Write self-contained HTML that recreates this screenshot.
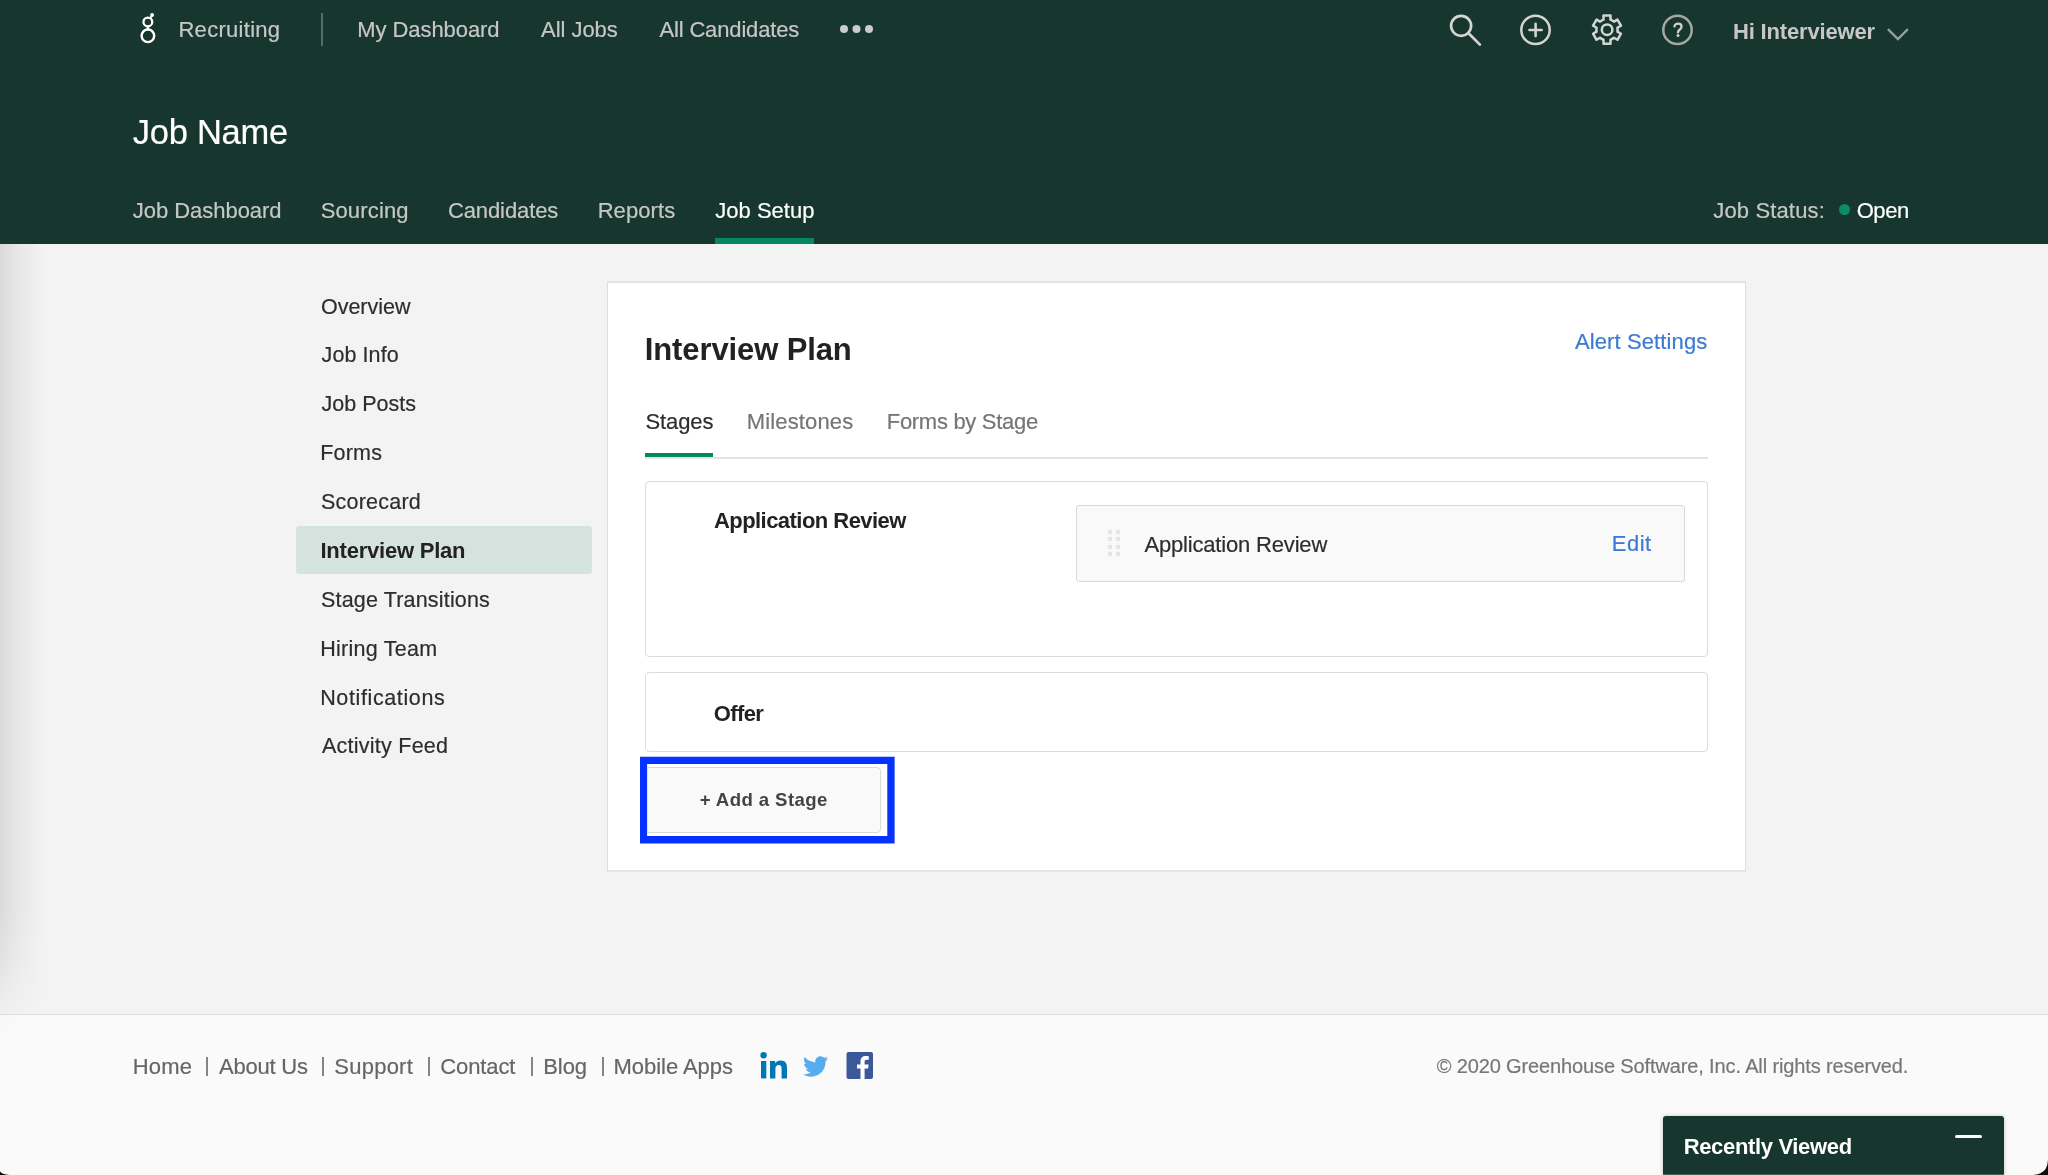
<!DOCTYPE html>
<html><head><meta charset="utf-8"><title>Interview Plan</title>
<style>
html,body{margin:0;padding:0;}
body{width:2048px;height:1175px;position:relative;overflow:hidden;background:#f3f3f3;font-family:"Liberation Sans",sans-serif;}
.t{position:absolute;white-space:nowrap;display:block;}
.b{position:absolute;box-sizing:border-box;}
svg{position:absolute;overflow:visible;}
#w{position:absolute;left:0;top:0;width:2048px;height:1175px;will-change:transform;}
</style></head><body><div id="w">
<div class="b" style="left:0px;top:0px;width:2048px;height:244px;background:#17362d;"></div>
<svg style="left:138px;top:10px" width="22" height="36" viewBox="138 10 22 36">
<circle cx="147.9" cy="35.8" r="6.3" fill="none" stroke="#fff" stroke-width="2.4"/>
<circle cx="147.85" cy="21.95" r="4.4" fill="none" stroke="#fff" stroke-width="2.3"/>
<path d="M147.9 26.3 V29.6" stroke="#fff" stroke-width="2.4" fill="none"/>
<path d="M150.2 18 L152 15.2" stroke="#fff" stroke-width="1.7" fill="none"/>
<circle cx="152.1" cy="15" r="1.9" fill="#fff"/>
</svg>
<span class="t" style="left:178.45px;top:17px;font-size:22px;line-height:25px;height:25px;color:#c7c7c7;letter-spacing:0.287px;-webkit-text-stroke:0.2px;">Recruiting</span>
<div class="b" style="left:321.2px;top:13px;width:1.5px;height:33px;background:#566d65;"></div>
<span class="t" style="left:357.35px;top:17px;font-size:22px;line-height:25px;height:25px;color:#c7c7c7;letter-spacing:-0.077px;-webkit-text-stroke:0.2px;">My Dashboard</span>
<span class="t" style="left:541.11px;top:17px;font-size:22px;line-height:25px;height:25px;color:#c7c7c7;letter-spacing:-0.056px;-webkit-text-stroke:0.2px;">All Jobs</span>
<span class="t" style="left:659.41px;top:17px;font-size:22px;line-height:25px;height:25px;color:#c7c7c7;letter-spacing:-0.148px;-webkit-text-stroke:0.2px;">All Candidates</span>
<svg style="left:838px;top:23px" width="38" height="12" viewBox="838 23 38 12">
<circle cx="844" cy="29" r="4" fill="#cccccc"/><circle cx="856.5" cy="29" r="4" fill="#cccccc"/><circle cx="869" cy="29" r="4" fill="#cccccc"/></svg>
<svg style="left:1440px;top:8px" width="260" height="46" viewBox="1440 8 260 46" fill="none" stroke="#d4d4d4" stroke-width="2.7">
<circle cx="1461.1" cy="25.8" r="10"/><path d="M1468.3 33 L1479.9 44.6" stroke-linecap="round"/>
<circle cx="1535.5" cy="29.9" r="14.2" stroke-width="2.5"/><path d="M1535.6 23.9 V36.1 M1529.5 30 H1541.7" stroke-width="2.6" stroke-linecap="round"/>
<path d="M1603.50 19.69L1603.50 15.60L1610.50 15.60L1610.50 19.69A10.6 10.6 0 0 1 1613.92 21.67L1617.46 19.62L1620.96 25.68L1617.42 27.73A10.6 10.6 0 0 1 1617.42 31.67L1620.96 33.72L1617.46 39.78L1613.92 37.73A10.6 10.6 0 0 1 1610.50 39.71L1610.50 43.80L1603.50 43.80L1603.50 39.71A10.6 10.6 0 0 1 1600.08 37.73L1596.54 39.78L1593.04 33.72L1596.58 31.67A10.6 10.6 0 0 1 1596.58 27.73L1593.04 25.68L1596.54 19.62L1600.08 21.67A10.6 10.6 0 0 1 1603.50 19.69Z" stroke-width="2.5" stroke-linejoin="round"/>
<circle cx="1607.1" cy="29.7" r="5.3" stroke-width="2.5"/>
<circle cx="1677.5" cy="29.9" r="14.2" stroke="#a6a6a6" stroke-width="2.5"/>
<path d="M1674.5 26.6 C1674.5 22.6 1681.6 22.6 1681.6 26.8 C1681.6 29.4 1678 29.6 1678 32.4" stroke="#d0d0d0" stroke-width="2.3" stroke-linecap="round"/>
<circle cx="1678" cy="35.5" r="1.5" fill="#d0d0d0" stroke="none"/>
</svg>
<span class="t" style="left:1732.98px;top:19px;font-size:22px;line-height:25px;height:25px;color:#c7c7c7;letter-spacing:-0.167px;font-weight:700;">Hi Interviewer</span>
<svg style="left:1884px;top:24px" width="30" height="20" viewBox="1884 24 30 20" fill="none" stroke="#9c9c9c" stroke-width="2.4">
<path d="M1887.9 29.2 L1897.9 39 L1907.9 29.2"/></svg>
<span class="t" style="left:132.81px;top:113px;font-size:34.5px;line-height:38px;height:38px;color:#fff;letter-spacing:-0.267px;-webkit-text-stroke:0.2px;">Job Name</span>
<span class="t" style="left:132.81px;top:198px;font-size:22px;line-height:25px;height:25px;color:#c7c7c7;letter-spacing:-0.037px;-webkit-text-stroke:0.2px;">Job Dashboard</span>
<span class="t" style="left:320.65px;top:198px;font-size:22px;line-height:25px;height:25px;color:#c7c7c7;letter-spacing:0.155px;-webkit-text-stroke:0.2px;">Sourcing</span>
<span class="t" style="left:447.93px;top:198px;font-size:22px;line-height:25px;height:25px;color:#c7c7c7;letter-spacing:-0.099px;-webkit-text-stroke:0.2px;">Candidates</span>
<span class="t" style="left:597.65px;top:198px;font-size:22px;line-height:25px;height:25px;color:#c7c7c7;letter-spacing:0.078px;-webkit-text-stroke:0.2px;">Reports</span>
<span class="t" style="left:715.31px;top:198px;font-size:22px;line-height:25px;height:25px;color:#fff;letter-spacing:-0.001px;-webkit-text-stroke:0.2px;">Job Setup</span>
<div class="b" style="left:715px;top:238px;width:99px;height:6px;background:#058762;"></div>
<span class="t" style="left:1713.31px;top:198px;font-size:22px;line-height:25px;height:25px;color:#c7c7c7;letter-spacing:0.139px;-webkit-text-stroke:0.2px;">Job Status:</span>
<div class="b" style="left:1839.3px;top:204.2px;width:10.6px;height:10.6px;background:#0e8a65;border-radius:50%;"></div>
<span class="t" style="left:1856.71px;top:198px;font-size:22px;line-height:25px;height:25px;color:#fff;letter-spacing:-0.449px;-webkit-text-stroke:0.2px;">Open</span>
<div class="b" style="left:0px;top:244px;width:52px;height:800px;background:linear-gradient(to right,rgba(0,0,0,0.103) 0,rgba(0,0,0,0.07) 10px,rgba(0,0,0,0.045) 20px,rgba(0,0,0,0.028) 30px,rgba(0,0,0,0.009) 40px,rgba(0,0,0,0) 50px);-webkit-mask-image:linear-gradient(to bottom,#000 0,#000 83%,rgba(0,0,0,0.65) 89.5%,rgba(0,0,0,0.15) 96%,rgba(0,0,0,0) 100%);mask-image:linear-gradient(to bottom,#000 0,#000 83%,rgba(0,0,0,0.65) 89.5%,rgba(0,0,0,0.15) 96%,rgba(0,0,0,0) 100%);z-index:5;"></div>
<div class="b" style="left:296px;top:526px;width:296px;height:48px;background:#d5e3de;border-radius:3px;"></div>
<span class="t" style="left:320.93px;top:295px;font-size:21.5px;line-height:24px;height:24px;color:#2d2d2d;letter-spacing:-0.005px;-webkit-text-stroke:0.2px;">Overview</span>
<span class="t" style="left:321.61px;top:343px;font-size:21.5px;line-height:24px;height:24px;color:#2d2d2d;letter-spacing:0.077px;-webkit-text-stroke:0.2px;">Job Info</span>
<span class="t" style="left:321.61px;top:392px;font-size:21.5px;line-height:24px;height:24px;color:#2d2d2d;letter-spacing:-0.012px;-webkit-text-stroke:0.2px;">Job Posts</span>
<span class="t" style="left:320.19px;top:441px;font-size:21.5px;line-height:24px;height:24px;color:#2d2d2d;letter-spacing:0.208px;-webkit-text-stroke:0.2px;">Forms</span>
<span class="t" style="left:320.97px;top:490px;font-size:21.5px;line-height:24px;height:24px;color:#2d2d2d;letter-spacing:0.234px;-webkit-text-stroke:0.2px;">Scorecard</span>
<span class="t" style="left:320.48px;top:538px;font-size:22px;line-height:25px;height:25px;color:#222;letter-spacing:-0.223px;font-weight:700;">Interview Plan</span>
<span class="t" style="left:320.97px;top:588px;font-size:21.5px;line-height:24px;height:24px;color:#2d2d2d;letter-spacing:0.172px;-webkit-text-stroke:0.2px;">Stage Transitions</span>
<span class="t" style="left:320.19px;top:637px;font-size:21.5px;line-height:24px;height:24px;color:#2d2d2d;letter-spacing:0.270px;-webkit-text-stroke:0.2px;">Hiring Team</span>
<span class="t" style="left:320.19px;top:686px;font-size:21.5px;line-height:24px;height:24px;color:#2d2d2d;letter-spacing:0.620px;-webkit-text-stroke:0.2px;">Notifications</span>
<span class="t" style="left:321.91px;top:734px;font-size:21.5px;line-height:24px;height:24px;color:#2d2d2d;letter-spacing:0.255px;-webkit-text-stroke:0.2px;">Activity Feed</span>
<div class="b" style="left:607px;top:281px;width:1139px;height:591px;background:#fff;border:1px solid #dedede;border-top:2px solid #e5e5e5;border-bottom:2px solid #e5e5e5;"></div>
<span class="t" style="left:644.78px;top:332px;font-size:31px;line-height:35px;height:35px;color:#222;letter-spacing:-0.113px;font-weight:700;">Interview Plan</span>
<span class="t" style="left:1574.91px;top:329px;font-size:22px;line-height:25px;height:25px;color:#3b7bd4;letter-spacing:0.115px;-webkit-text-stroke:0.2px;">Alert Settings</span>
<span class="t" style="left:645.45px;top:409px;font-size:22px;line-height:25px;height:25px;color:#2d2d2d;letter-spacing:-0.100px;-webkit-text-stroke:0.2px;">Stages</span>
<span class="t" style="left:746.85px;top:409px;font-size:22px;line-height:25px;height:25px;color:#757575;letter-spacing:0.127px;-webkit-text-stroke:0.2px;">Milestones</span>
<span class="t" style="left:886.75px;top:409px;font-size:22px;line-height:25px;height:25px;color:#757575;letter-spacing:-0.300px;-webkit-text-stroke:0.2px;">Forms by Stage</span>
<div class="b" style="left:645px;top:457px;width:1062.5px;height:2px;background:#e4e4e4;"></div>
<div class="b" style="left:645px;top:453px;width:68px;height:4.3px;background:#058762;"></div>
<div class="b" style="left:645px;top:481px;width:1063px;height:176px;background:#fff;border:1.5px solid #dcdcdc;border-radius:4px;"></div>
<span class="t" style="left:713.90px;top:508px;font-size:22px;line-height:25px;height:25px;color:#222;letter-spacing:-0.541px;font-weight:700;">Application Review</span>
<div class="b" style="left:1075.5px;top:504.5px;width:609px;height:77px;background:#f9f9f9;border:1.5px solid #d9d9d9;border-radius:3px;"></div>
<div class="b" style="left:1108.4px;top:529.9px;width:4.1px;height:4px;background:#e5e5e5;"></div>
<div class="b" style="left:1116.0px;top:529.9px;width:4.1px;height:4px;background:#e5e5e5;"></div>
<div class="b" style="left:1108.4px;top:537.1999999999999px;width:4.1px;height:4px;background:#e5e5e5;"></div>
<div class="b" style="left:1116.0px;top:537.1999999999999px;width:4.1px;height:4px;background:#e5e5e5;"></div>
<div class="b" style="left:1108.4px;top:544.5px;width:4.1px;height:4px;background:#e5e5e5;"></div>
<div class="b" style="left:1116.0px;top:544.5px;width:4.1px;height:4px;background:#e5e5e5;"></div>
<div class="b" style="left:1108.4px;top:551.8px;width:4.1px;height:4px;background:#e5e5e5;"></div>
<div class="b" style="left:1116.0px;top:551.8px;width:4.1px;height:4px;background:#e5e5e5;"></div>
<span class="t" style="left:1144.41px;top:532px;font-size:22px;line-height:25px;height:25px;color:#2d2d2d;letter-spacing:-0.175px;-webkit-text-stroke:0.2px;">Application Review</span>
<span class="t" style="left:1611.85px;top:531px;font-size:22px;line-height:25px;height:25px;color:#3b7bd4;letter-spacing:0.452px;-webkit-text-stroke:0.2px;">Edit</span>
<div class="b" style="left:645px;top:672px;width:1063px;height:80px;background:#fff;border:1.5px solid #dcdcdc;border-radius:4px;"></div>
<span class="t" style="left:713.75px;top:701px;font-size:22px;line-height:25px;height:25px;color:#222;letter-spacing:-0.607px;font-weight:700;">Offer</span>
<div class="b" style="left:645px;top:767px;width:236px;height:65.5px;background:#f9f9f9;border:1px solid #d9d9d9;border-radius:4px;"></div>
<span class="t" style="left:699.67px;top:789px;font-size:18.6px;line-height:21px;height:21px;color:#444;letter-spacing:0.408px;font-weight:700;">+ Add a Stage</span>
<svg style="left:636px;top:752px" width="264" height="96" viewBox="636 752 264 96"><path fill-rule="evenodd" fill="#0433ff" d="M640 756.8H894.6V843.4H640Z M647.1 764.1V836.1H887.3V764.1Z"/></svg>
<div class="b" style="left:0px;top:1014px;width:2048px;height:161px;background:#fafafa;border-top:1.5px solid #dedede;"></div>
<span class="t" style="left:132.75px;top:1054px;font-size:22px;line-height:25px;height:25px;color:#666;letter-spacing:0.166px;-webkit-text-stroke:0.2px;">Home</span>
<span class="t" style="left:219.01px;top:1054px;font-size:22px;line-height:25px;height:25px;color:#666;letter-spacing:-0.222px;-webkit-text-stroke:0.2px;">About Us</span>
<span class="t" style="left:334.25px;top:1054px;font-size:22px;line-height:25px;height:25px;color:#666;letter-spacing:0.251px;-webkit-text-stroke:0.2px;">Support</span>
<span class="t" style="left:440.23px;top:1054px;font-size:22px;line-height:25px;height:25px;color:#666;letter-spacing:-0.107px;-webkit-text-stroke:0.2px;">Contact</span>
<span class="t" style="left:543.15px;top:1054px;font-size:22px;line-height:25px;height:25px;color:#666;letter-spacing:-0.037px;-webkit-text-stroke:0.2px;">Blog</span>
<span class="t" style="left:613.45px;top:1054px;font-size:22px;line-height:25px;height:25px;color:#666;letter-spacing:-0.026px;-webkit-text-stroke:0.2px;">Mobile Apps</span>
<div class="b" style="left:206px;top:1057px;width:2px;height:19px;background:#858585;"></div>
<div class="b" style="left:322px;top:1057px;width:2px;height:19px;background:#858585;"></div>
<div class="b" style="left:428px;top:1057px;width:2px;height:19px;background:#858585;"></div>
<div class="b" style="left:531px;top:1057px;width:2px;height:19px;background:#858585;"></div>
<div class="b" style="left:602px;top:1057px;width:2px;height:19px;background:#858585;"></div>
<span class="t" style="left:1436.65px;top:1055px;font-size:20px;line-height:22px;height:22px;color:#777;letter-spacing:-0.127px;-webkit-text-stroke:0.2px;">© 2020 Greenhouse Software, Inc. All rights reserved.</span>
<svg style="left:760px;top:1052px" width="27" height="27" viewBox="0 0 27 27" fill="#0077b5">
<circle cx="3.6" cy="3.3" r="3.2"/><rect x="1" y="9" width="5.3" height="17.4"/>
<path d="M10 9 h5.2 v2.4 c1-1.8 3-2.9 5.4-2.9 c4.6 0 6.4 2.7 6.4 7.4 V26.4 h-5.4 V17 c0-2.3-.6-3.9-2.9-3.9 c-2.4 0-3.3 1.7-3.3 3.9 v9.4 H10 z"/></svg>
<svg style="left:803.2px;top:1056.3px" width="25.2" height="20.8" viewBox="0 0 24 19.5" fill="#55acee">
<path d="M24 2.3c-.9.4-1.8.7-2.8.8 1-.6 1.800-1.600 2.200-2.700-1 .6-2 1-3.100 1.200A4.920 4.920 0 0 0 16.600 0c-2.700 0-4.900 2.200-4.900 4.900 0 .4 0 .8.100 1.100C7.700 5.800 4.100 3.900 1.700.9c-.4.700-.7 1.600-.7 2.500 0 1.700.9 3.200 2.200 4.100-.8 0-1.600-.2-2.200-.6v.1c0 2.400 1.700 4.400 3.900 4.800-.4.100-.800.200-1.300.200-.3 0-.6 0-.9-.1.600 2 2.400 3.400 4.600 3.400-1.700 1.300-3.800 2.100-6.100 2.100-.4 0-.8 0-1.200-.100 2.200 1.400 4.800 2.200 7.500 2.200 9.100 0 14-7.500 14-14v-.600c1-.7 1.800-1.600 2.500-2.600z"/></svg>
<svg style="left:846px;top:1052px" width="27" height="27" viewBox="0 0 27 27">
<rect x="0.5" width="26.5" height="27" rx="2" fill="#3b5998"/>
<path d="M18.600 27V16.500h3.500l.5-4.100h-4V9.800c0-1.200.3-2 2-2h2.200V4.200c-.4 0-1.700-.2-3.100-.2-3.100 0-5.200 1.900-5.200 5.400v3h-3.500v4.100h3.500V27z" fill="#fff"/></svg>
<div class="b" style="left:1663px;top:1116px;width:341px;height:60px;background:#17362d;border-radius:3px 3px 0 0;box-shadow:0 0 4px rgba(0,0,0,0.22);"></div>
<div class="b" style="left:1663px;top:1174px;width:341px;height:1px;background:#4a6359;"></div>
<span class="t" style="left:1683.68px;top:1134px;font-size:22px;line-height:25px;height:25px;color:#fff;letter-spacing:-0.343px;font-weight:700;">Recently Viewed</span>
<div class="b" style="left:1955px;top:1135px;width:26.5px;height:3px;background:#fff;border-radius:1.5px;"></div>
<svg style="left:0;top:1155px;z-index:9" width="2048" height="20" viewBox="0 1155 2048 20"><path d="M0 1175 V1171.3 Q1.5 1174.6 9.5 1175 Z" fill="#0a0a0a"/><path d="M2048 1175 V1159.8 Q2047.5 1174.5 2033 1175 Z" fill="#0a0a0a"/></svg>
</div></body></html>
